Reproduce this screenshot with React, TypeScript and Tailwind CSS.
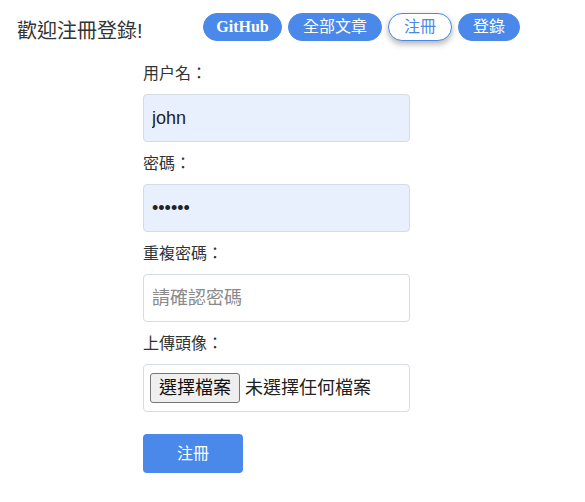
import React from "react";

const cjk = { fontFamily: '"Liberation Sans", "Noto Sans CJK TC", sans-serif' };

function Field({ label, children }: { label: string; children: React.ReactNode }) {
  return (
    <div className="mb-[10px]">
      <div className="text-[16px] leading-[24px] text-[#333] mb-2">{label}</div>
      {children}
    </div>
  );
}

export default function App() {
  const inputCls =
    "block w-[267px] h-[48px] px-[8px] rounded-[4px] border border-[#d6dce3] text-[18px] text-[#222] outline-none";
  return (
    <div className="w-[585px] h-[502px] bg-white" style={cjk}>
      <div className="flex items-start pt-[13px] pl-[17px]">
        <div className="text-[20px] leading-[28px] text-[#333] mt-[4px] w-[186px]">歡迎注冊登錄!</div>
        <div className="flex gap-[6px]">
          <button
            className="h-[28px] w-[79px] rounded-full bg-[#4a89ea] border border-[#4a89ea] text-white text-[16px] font-bold leading-none"
            style={{ fontFamily: '"Liberation Serif", serif' }}
          >
            GitHub
          </button>
          <button className="h-[28px] w-[94px] rounded-full bg-[#4a89ea] border border-[#4a89ea] text-white text-[16px] leading-none">
            全部文章
          </button>
          <button className="h-[28px] w-[64px] rounded-full bg-white border border-[#4a89ea] text-[#4a89ea] text-[16px] leading-none shadow-[0_3px_6px_rgba(0,0,0,0.3)]">
            注冊
          </button>
          <button className="h-[28px] w-[62px] rounded-full bg-[#4a89ea] border border-[#4a89ea] text-white text-[16px] leading-none">
            登錄
          </button>
        </div>
      </div>

      <div className="pl-[143px] pt-[17px]">
        <Field label="用户名：">
          <input className={inputCls + " bg-[#e8f0fe]"} defaultValue="john" style={cjk} />
        </Field>
        <Field label="密碼：">
          <input type="password" className={inputCls + " bg-[#e8f0fe]"} defaultValue="123456" style={cjk} />
        </Field>
        <Field label="重複密碼：">
          <input
            type="password"
            className={inputCls + " bg-white placeholder:text-[#8a8a8a]"}
            placeholder="請確認密碼"
            style={cjk}
          />
        </Field>
        <Field label="上傳頭像：">
          <div className="flex items-center w-[267px] h-[48px] px-[6px] rounded-[4px] border border-[#d6dce3] bg-white">
            <span className="h-[30px] px-[8px] flex items-center bg-[#efefef] border border-[#767676] rounded-[3px] text-[18px] text-[#111]">
              選擇檔案
            </span>
            <span className="ml-[5px] text-[18px] text-[#222]">未選擇任何檔案</span>
          </div>
        </Field>
        <button className="mt-[12px] w-[100px] h-[39px] rounded-[4px] bg-[#4a89ea] text-white text-[16px]">
          注冊
        </button>
      </div>
    </div>
  );
}
